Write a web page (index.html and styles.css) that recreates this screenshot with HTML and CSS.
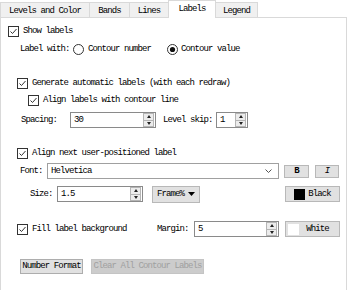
FILE: index.html
```html
<!DOCTYPE html>
<html>
<head>
<meta charset="utf-8">
<link rel="stylesheet" href="styles.css">
</head>
<body>
<div class="tabs">
  <div class="tab t1">Levels and Color</div>
  <div class="tab t2">Bands</div>
  <div class="tab t3">Lines</div>
  <div class="tab sel">Labels</div>
  <div class="tab t5">Legend</div>
</div>
<div class="panel">
  <div class="row r-show">
    <span class="cb"><svg width="11" height="11" viewBox="0 0 11 11"><rect x="0.5" y="0.5" width="10" height="10" fill="#fff" stroke="#333"/><path d="M2.5 5.5 L4.5 7.5 L8.5 3" fill="none" stroke="#333" stroke-width="1"/></svg></span>
    <span>Show labels</span>
  </div>
  <div class="row r-with">
    <span class="w-lw">Label with:</span>
    <span class="rb"><svg width="11" height="11" viewBox="0 0 11 11"><circle cx="5.5" cy="5.5" r="5" fill="#fff" stroke="#333"/></svg></span>
    <span class="w-cn">Contour number</span>
    <span class="rb"><svg width="11" height="11" viewBox="0 0 11 11"><circle cx="5.5" cy="5.5" r="5" fill="#fff" stroke="#333"/><circle cx="5.5" cy="5.5" r="2.6" fill="#111"/></svg></span>
    <span class="w-cv">Contour value</span>
  </div>
  <div class="row r-gen">
    <span class="cb"><svg width="11" height="11" viewBox="0 0 11 11"><rect x="0.5" y="0.5" width="10" height="10" fill="#fff" stroke="#333"/><path d="M2.5 5.5 L4.5 7.5 L8.5 3" fill="none" stroke="#333" stroke-width="1"/></svg></span>
    <span>Generate automatic labels (with each redraw)</span>
  </div>
  <div class="row r-align">
    <span class="cb"><svg width="11" height="11" viewBox="0 0 11 11"><rect x="0.5" y="0.5" width="10" height="10" fill="#fff" stroke="#333"/><path d="M2.5 5.5 L4.5 7.5 L8.5 3" fill="none" stroke="#333" stroke-width="1"/></svg></span>
    <span>Align labels with contour line</span>
  </div>
  <div class="row r-spacing">
    <span class="w-sp">Spacing:</span>
    <div class="spin w-in1"><span class="val">30</span><span class="spbtn"><span class="up"></span><span class="dn"></span></span></div>
    <span class="w-ls">Level skip:</span>
    <div class="spin w-in2"><span class="val">1</span><span class="spbtn"><span class="up"></span><span class="dn"></span></span></div>
  </div>
  <div class="row r-next">
    <span class="cb"><svg width="11" height="11" viewBox="0 0 11 11"><rect x="0.5" y="0.5" width="10" height="10" fill="#fff" stroke="#333"/><path d="M2.5 5.5 L4.5 7.5 L8.5 3" fill="none" stroke="#333" stroke-width="1"/></svg></span>
    <span>Align next user-positioned label</span>
  </div>
  <div class="row r-font">
    <span class="w-font">Font:</span>
    <div class="select"><span class="val">Helvetica</span><svg class="chev" width="7" height="4" viewBox="0 0 7 4"><path d="M0.5 0.5 L3.5 3.5 L6.5 0.5" fill="none" stroke="#555" stroke-width="1"/></svg></div>
    <button class="btn b-b"><b>B</b></button>
    <button class="btn b-i"><i>I</i></button>
  </div>
  <div class="row r-size">
    <span class="w-size">Size:</span>
    <div class="spin w-in3"><span class="val">1.5</span><span class="spbtn"><span class="up"></span><span class="dn"></span></span></div>
    <button class="btn b-frame">Frame% <svg width="7" height="4" viewBox="0 0 7 4"><path d="M0 0 L7 0 L3.5 4 Z" fill="#000"/></svg></button>
    <span class="grow"></span>
    <button class="btn b-color"><span class="sw sw-black"></span>Black</button>
  </div>
  <div class="row r-fill">
    <span class="cb"><svg width="11" height="11" viewBox="0 0 11 11"><rect x="0.5" y="0.5" width="10" height="10" fill="#fff" stroke="#333"/><path d="M2.5 5.5 L4.5 7.5 L8.5 3" fill="none" stroke="#333" stroke-width="1"/></svg></span>
    <span class="w-fill">Fill label background</span>
    <span class="w-mg">Margin:</span>
    <div class="spin w-in4"><span class="val">5</span><span class="spbtn"><span class="up"></span><span class="dn"></span></span></div>
    <span class="grow"></span>
    <button class="btn b-color b-white"><span class="sw sw-white"></span>White</button>
  </div>
  <div class="row r-btns">
    <button class="btn b-nf">Number Format</button>
    <button class="btn b-clear" disabled>Clear All Contour Labels</button>
  </div>
</div>
</body>
</html>
```
FILE: styles.css
```css
* { box-sizing: border-box; }
body {
  margin: 0;
  width: 347px;
  height: 290px;
  overflow: hidden;
  background: #fff;
  font-family: "Liberation Mono", "DejaVu Sans Mono", monospace;
  font-size: 9px;
  letter-spacing: -0.9px;
  color: #000;
}
.tabs {
  display: flex;
  align-items: flex-end;
  height: 18px;
  border-bottom: 1px solid #d9d9d9;
}
.tab {
  height: 15px;
  background: #f0f0f0;
  border: 1px solid #d9d9d9;
  border-bottom: none;
  border-left: none;
  display: flex;
  align-items: center;
  justify-content: center;
  padding-top: 1px;
  white-space: nowrap;
}
.t1 { width: 90px; border-left: 1px solid #d9d9d9; }
.t2 { width: 40px; }
.t3 { width: 39px; }
.sel {
  width: 48px;
  height: 18px;
  margin-bottom: -1px;
  background: #fff;
  border-left: 1px solid #d9d9d9;
  margin-left: -1px;
  padding-bottom: 2px;
}
.t5 { width: 42px; }
.panel {
  height: 272px;
  border-left: 1px solid #d9d9d9;
  border-right: 1px solid #d9d9d9;
  display: flex;
  flex-direction: column;
}
.row {
  display: flex;
  align-items: center;
  height: 16px;
  white-space: nowrap;
}
.grow { flex: 1; }
.cb, .rb { display: flex; width: 11px; height: 11px; flex: none; }
.cb { margin-right: 4px; }
.r-show { margin-top: 5px; padding-left: 7px; }
.r-with { margin-top: 2px; padding-left: 19px; }
.w-lw { width: 53px; }
.w-cn { width: 79px; margin-left: 4px; }
.w-cv { margin-left: 3px; }
.r-gen { margin-top: 18px; padding-left: 16px; }
.r-align { margin-top: 1px; padding-left: 27px; }
.r-spacing { margin-top: 4px; padding-left: 20px; }
.w-sp { width: 49px; }
.w-ls { width: 53px; margin-left: 7px; }
.r-next { margin-top: 17px; padding-left: 16px; }
.r-font { margin-top: 2px; padding-left: 19px; }
.w-font { width: 27px; }
.r-size { margin-top: 7px; padding-left: 29px; padding-right: 6px; }
.w-size { width: 27px; }
.r-fill { margin-top: 19px; padding-left: 16px; padding-right: 6px; }
.w-fill { width: 125px; }
.w-mg { width: 37px; }
.r-btns { margin-top: 21px; padding-left: 19px; }

.spin, .select {
  height: 16px;
  background: #fff;
  border: 1px solid #8a8a8a;
  display: flex;
  align-items: center;
  padding-left: 3px;
  flex: none;
}
.spin .val, .select .val { flex: 1; }
.w-in1 { width: 86px; }
.w-in2 { width: 32px; }
.w-in3 { width: 86px; }
.w-in4 { width: 85px; }
.spbtn {
  width: 11px;
  height: 14px;
  margin-right: 1px;
  display: flex;
  flex-direction: column;
  border: 1px solid #b5b5b5;
  background: #ececec;
}
.spbtn .up, .spbtn .dn {
  flex: 1;
  display: flex;
  align-items: center;
  justify-content: center;
}
.spbtn .up { border-bottom: 1px solid #b5b5b5; }
.spbtn .up::after {
  content: "";
  border-left: 2px solid transparent;
  border-right: 2px solid transparent;
  border-bottom: 3px solid #222;
}
.spbtn .dn::after {
  content: "";
  border-left: 2px solid transparent;
  border-right: 2px solid transparent;
  border-top: 3px solid #222;
}
.select { width: 232px; border-color: #a0a0a0; }
.chev { margin-right: 6px; }

.btn {
  font: inherit;
  letter-spacing: inherit;
  color: #000;
  height: 15px;
  padding: 0;
  background: #e1e1e1;
  border: 1px solid #b8b8b8;
  display: flex;
  align-items: center;
  justify-content: center;
  white-space: nowrap;
  flex: none;
}
.b-b { width: 25px; margin-left: 5px; height: 13px; }
.b-i { width: 24px; margin-left: 6px; height: 13px; }
.b-frame { width: 48px; height: 17px; margin-left: 9px; gap: 4px; }
.b-color { width: 55px; height: 16px; gap: 3px; }
.sw { width: 11px; height: 11px; display: block; }
.sw-black { background: #000; }
.sw-white { background: #fff; }
.b-white .sw { margin-left: -8px; margin-right: 4px; }
.b-nf { width: 63px; border-color: #adadad; }
.b-clear { width: 113px; margin-left: 8px; background: #cccccc; border-color: #c4c4c4; color: #a0a0a0; }
```
